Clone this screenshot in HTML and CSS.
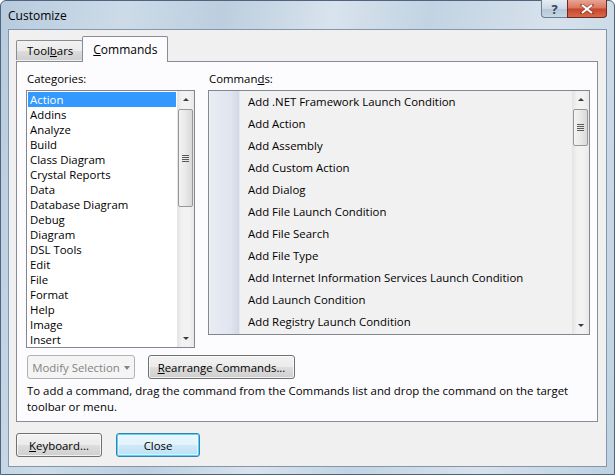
FILE: index.html
```html
<!DOCTYPE html>
<html lang="en">
<head>
    <meta charset="UTF-8">
    <title>Customize</title>
    <link rel="stylesheet" href="styles.css">
</head>
<body>
    <div class="window">
        <div class="titlebar">
            <span class="title">Customize</span>
            <div class="caption-buttons">
                <div class="cap help">?</div>
                <div class="cap close">
                    <svg width="14" height="10" viewBox="0 0 14 10">
                        <path d="M2 1 L12 9 M12 1 L2 9" stroke="#5a1a10" stroke-width="3.4" stroke-linecap="square" opacity="0.5"/>
                        <path d="M2 1 L12 9 M12 1 L2 9" stroke="#fff" stroke-width="2.2"/>
                    </svg>
                </div>
            </div>
        </div>

        <div class="client">
            <div class="tabs">
                <div class="tab">Tool<u>b</u>ars</div>
                <div class="tab active"><u>C</u>ommands</div>
            </div>

            <div class="panel">
                <div class="lists">
                    <div class="cat-col">
                        <div class="label">Cate<u>g</u>ories:</div>
                        <div class="listbox cat-list">
                            <ul class="items">
                                <li class="selected">Action</li>
                                <li>Addins</li>
                                <li>Analyze</li>
                                <li>Build</li>
                                <li>Class Diagram</li>
                                <li>Crystal Reports</li>
                                <li>Data</li>
                                <li>Database Diagram</li>
                                <li>Debug</li>
                                <li>Diagram</li>
                                <li>DSL Tools</li>
                                <li>Edit</li>
                                <li>File</li>
                                <li>Format</li>
                                <li>Help</li>
                                <li>Image</li>
                                <li>Insert</li>
                            </ul>
                            <div class="scrollbar">
                                <div class="arrow up"></div>
                                <div class="track">
                                    <div class="thumb cat-thumb"><span class="grip"></span></div>
                                </div>
                                <div class="arrow down"></div>
                            </div>
                        </div>
                    </div>

                    <div class="cmd-col">
                        <div class="label">Comman<u>d</u>s:</div>
                        <div class="listbox cmd-list">
                            <div class="icon-strip"></div>
                            <ul class="items">
                                <li>Add .NET Framework Launch Condition</li>
                                <li>Add Action</li>
                                <li>Add Assembly</li>
                                <li>Add Custom Action</li>
                                <li>Add Dialog</li>
                                <li>Add File Launch Condition</li>
                                <li>Add File Search</li>
                                <li>Add File Type</li>
                                <li>Add Internet Information Services Launch Condition</li>
                                <li>Add Launch Condition</li>
                                <li>Add Registry Launch Condition</li>
                            </ul>
                            <div class="scrollbar">
                                <div class="arrow up"></div>
                                <div class="track">
                                    <div class="thumb cmd-thumb"><span class="grip"></span></div>
                                </div>
                                <div class="arrow down"></div>
                            </div>
                        </div>
                    </div>
                </div>

                <div class="actions">
                    <button class="btn disabled modify">Modify Selection <span class="caret"></span></button>
                    <button class="btn rearrange"><u>R</u>earrange Commands...</button>
                </div>

                <p class="hint">To add a command, drag the command from the Commands list and drop the command on the target toolbar or menu.</p>
            </div>

            <div class="footer">
                <button class="btn keyboard"><u>K</u>eyboard...</button>
                <button class="btn default close-btn">Close</button>
            </div>
        </div>
    </div>
</body>
</html>
```

FILE: styles.css
```css
body {
    margin: 0;
    font-family: 'Open Sans', 'Noto Sans', sans-serif;
    font-size: 11.4px;
    color: #000;
    background: #fff;
}

u {
    text-decoration: underline;
    text-underline-offset: 1px;
}

.window {
    width: 615px;
    height: 475px;
    box-sizing: border-box;
    display: flex;
    flex-direction: column;
    border: 1px solid #50657d;
    border-radius: 6px 6px 0 0;
    background: linear-gradient(
        100deg,
        #b7cbde 0%,
        #cddbe8 18%,
        #bccedf 32%,
        #d8e3ed 48%,
        #c2d3e3 62%,
        #d7e2ec 80%,
        #bfd1e2 100%
    );
}

/* title bar */
.titlebar {
    height: 28px;
    display: flex;
    justify-content: space-between;
    align-items: flex-start;
    padding: 0 7px 0 7px;
}
.title {
    margin-top: 6px;
    font-size: 12px;
}
.caption-buttons {
    display: flex;
    margin-top: -1px;
}
.cap {
    height: 18px;
    display: flex;
    align-items: center;
    justify-content: center;
    box-sizing: border-box;
    border: 1px solid #6d7f93;
    border-top: none;
}
.cap.help {
    width: 26px;
    border-radius: 0 0 0 4px;
    border-right: none;
    background: linear-gradient(#e4ecf4 0%, #cdd9e6 50%, #b4c6d8 51%, #c8d6e4 100%);
    color: #34465a;
    font-weight: bold;
    font-size: 13px;
}
.cap.close {
    width: 40px;
    border-radius: 0 0 4px 0;
    border-color: #6b2a20;
    background: linear-gradient(#e9a493 0%, #d9755e 48%, #c5452c 52%, #d9694c 100%);
}

/* client area */
.client {
    flex: 1;
    margin: 0 7px 7px 7px;
    background: #f0f0f0;
    border: 1px solid #8396ab;
    padding: 6px 8px 0 7px;
    display: flex;
    flex-direction: column;
}

.tabs {
    display: flex;
    align-items: flex-end;
    height: 25px;
    position: relative;
    z-index: 1;
}
.tab {
    height: 20px;
    padding: 0 9px 0 10px;
    box-sizing: border-box;
    border: 1px solid #898c95;
    border-bottom: none;
    border-radius: 2px 2px 0 0;
    background: linear-gradient(#f2f2f2 0%, #ebebeb 50%, #dddddd 51%, #cfcfcf 100%);
    display: flex;
    align-items: center;
    margin-bottom: 1px;
}
.tab.active {
    height: 26px;
    padding: 0 10px;
    margin-left: -1px;
    margin-bottom: -1px;
    background: #fcfcfe;
    font-size: 12px;
}

.panel {
    height: 361px;
    box-sizing: border-box;
    border: 1px solid #898c95;
    background: #fcfcfe;
    padding: 9px 6px 0 9px;
}

.lists {
    display: flex;
    gap: 13px;
    align-items: flex-start;
}
.label {
    height: 15px;
    line-height: 15px;
    margin-bottom: 4px;
    padding-left: 1px;
}

.listbox {
    border: 1px solid #828790;
    box-sizing: border-box;
    display: flex;
    overflow: hidden;
    background: #fff;
}
.cat-list {
    width: 169px;
    height: 258px;
}
.cmd-list {
    width: 382px;
    height: 245px;
    background: #f1f1f1;
}

.items {
    list-style: none;
    margin: 0;
    padding: 0;
    flex: 1;
    overflow: hidden;
}
.cat-list .items {
    padding: 1px 1px 0 1px;
}
.cat-list li {
    height: 15px;
    line-height: 15px;
    padding-left: 2px;
    white-space: nowrap;
}
.cat-list li.selected {
    background: #3399ff;
    color: #fff;
}

.icon-strip {
    width: 29px;
    flex: none;
    margin-left: 1px;
    background: linear-gradient(90deg, #e9ecf4 0%, #e1e5ef 70%, #d3d8e6 100%);
    border-right: 1px solid #e6e8ee;
}
.cmd-list li {
    height: 22px;
    line-height: 22px;
    padding-left: 8px;
    white-space: nowrap;
}

/* scrollbars */
.scrollbar {
    width: 17px;
    flex: none;
    display: flex;
    flex-direction: column;
    background: linear-gradient(90deg, #e3e3e3 0%, #f2f2f2 30%, #f2f2f2 70%, #e8e8e8 100%);
}
.arrow {
    height: 17px;
    flex: none;
    display: flex;
    align-items: center;
    justify-content: center;
}
.arrow::before {
    content: '';
    border-left: 3px solid transparent;
    border-right: 3px solid transparent;
}
.arrow.up::before {
    border-bottom: 3px solid #3c3c3c;
}
.arrow.down::before {
    border-top: 3px solid #3c3c3c;
}
.track {
    flex: 1;
    padding: 1px 1px 0 1px;
}
.thumb {
    box-sizing: border-box;
    border: 1px solid #979797;
    border-radius: 2px;
    background: linear-gradient(90deg, #f3f3f3 0%, #e9e9e9 50%, #d8d8d8 100%);
    display: flex;
    align-items: center;
    justify-content: center;
}
.cat-thumb {
    height: 98px;
}
.cmd-thumb {
    height: 37px;
}
.grip {
    width: 7px;
    height: 7px;
    background: repeating-linear-gradient(#5a5a5a 0 1px, transparent 1px 2px);
}

/* buttons */
.btn {
    font-family: inherit;
    font-size: inherit;
    height: 24px;
    box-sizing: border-box;
    border: 1px solid #707070;
    border-radius: 3px;
    background: linear-gradient(#f2f2f2 0%, #ebebeb 50%, #dddddd 51%, #cfcfcf 100%);
    box-shadow: inset 0 0 0 1px rgba(255, 255, 255, 0.7);
    padding: 0;
    color: #000;
}
.btn.disabled {
    border-color: #adb2b5;
    background: #f4f4f4;
    box-shadow: none;
    color: #838383;
}
.caret {
    display: inline-block;
    vertical-align: middle;
    border-left: 3px solid transparent;
    border-right: 3px solid transparent;
    border-top: 4px solid #838383;
    margin-left: 1px;
}
.btn.default {
    border-color: #3c7fb1;
    box-shadow: inset 0 0 0 1px #48d8fb, inset 0 0 0 2px rgba(255, 255, 255, 0.5);
    background: linear-gradient(#eaf6fd 0%, #e2f2fb 50%, #cfe8f7 51%, #bee1f5 100%);
}

.actions {
    display: flex;
    gap: 13px;
    margin-top: 7px;
    padding-left: 1px;
}
.modify {
    width: 108px;
}
.rearrange {
    width: 147px;
}

.hint {
    margin: 4px 0 0 1px;
    line-height: 15.5px;
    width: 570px;
}

.footer {
    display: flex;
    gap: 14px;
    margin-top: 11px;
}
.keyboard {
    width: 86px;
}
.close-btn {
    width: 84px;
}
```
